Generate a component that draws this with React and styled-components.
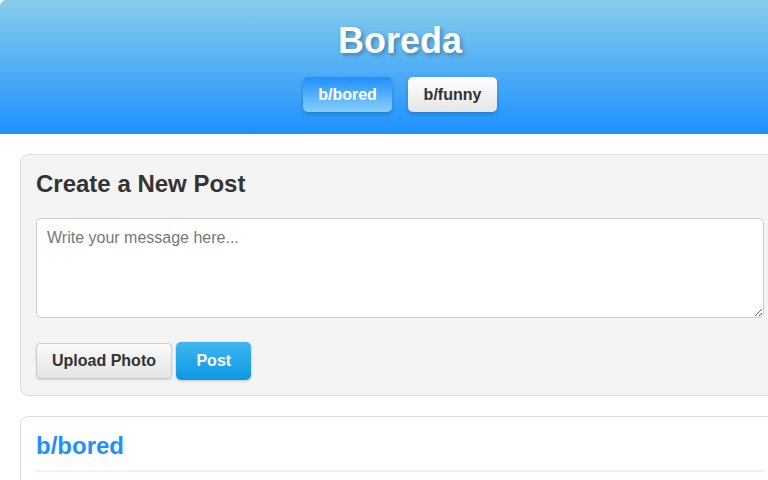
import styled, { createGlobalStyle, css } from "styled-components";

const GlobalStyle = createGlobalStyle`
  body {
    margin: 0;
    background: #fff;
    font-family: "Liberation Sans", Arial, sans-serif;
    color: #333;
  }
`;

const Page = styled.div`
  width: 800px;
`;

const Header = styled.header`
  background: linear-gradient(#87ceeb, #1e90ff);
  border-radius: 6px 6px 0 0;
  padding: 20px 20px 22px;
  text-align: center;
`;

const Title = styled.h1`
  margin: 0 0 15px;
  font-size: 36px;
  font-weight: bold;
  color: #fff;
  text-shadow: 2px 2px 4px rgba(0, 0, 0, 0.3);
`;

const Nav = styled.nav`
  display: flex;
  justify-content: center;
  gap: 16px;
`;

const NavButton = styled.button`
  font-family: inherit;
  font-size: 16px;
  font-weight: bold;
  padding: 8px 15px;
  line-height: 19px;
  width: 89px;
  border: none;
  border-radius: 5px;
  cursor: pointer;
  box-shadow: 0 2px 4px rgba(0, 0, 0, 0.2);
  ${(p) =>
    p.$active
      ? css`
          background: linear-gradient(#1e90ff, #87cefa);
          color: #fff;
        `
      : css`
          background: linear-gradient(#ffffff, #e6e6e6);
          color: #333;
        `}
`;

const Main = styled.main`
  padding: 20px;
`;

const Card = styled.section`
  box-sizing: border-box;
  width: 100%;
  background: ${(p) => (p.$muted ? "#f4f4f4" : "#fff")};
  border: 1px solid #ddd;
  border-radius: 8px;
  padding: 15px;
  margin-bottom: 20px;
`;

const CardTitle = styled.h2`
  margin: 0 0 20px;
  font-size: 24px;
  font-weight: bold;
  color: #333;
`;

const BoardTitle = styled.h2`
  margin: 0;
  padding-bottom: 10px;
  font-size: 24px;
  font-weight: bold;
  color: #1e90ff;
  border-bottom: 2px solid #e8f3fe;
`;

const TextArea = styled.textarea`
  display: block;
  box-sizing: border-box;
  width: 100%;
  height: 100px;
  padding: 10px;
  border: 1px solid #ccc;
  border-radius: 5px;
  font-family: inherit;
  font-size: 16px;
  color: #333;
  margin-bottom: 24px;
  &::placeholder {
    color: #777;
  }
`;

const Actions = styled.div``;

const UploadButton = styled.button`
  font-family: inherit;
  font-size: 16px;
  font-weight: bold;
  padding: 8px 15px;
  border: 1px solid #ccc;
  border-radius: 4px;
  background: linear-gradient(#fafafa, #e4e4e4);
  color: #333;
  box-shadow: 0 1px 2px rgba(0, 0, 0, 0.15);
  cursor: pointer;
`;

const PostButton = styled.button`
  font-family: inherit;
  font-size: 16px;
  font-weight: bold;
  padding: 10px 20px;
  border: none;
  border-radius: 5px;
  background: linear-gradient(#42b5f1, #0a98e2);
  color: #fff;
  box-shadow: 0 1px 3px rgba(0, 0, 0, 0.2);
  cursor: pointer;
`;

const App = () => {
  return (
    <Page>
      <GlobalStyle />
      <Header>
        <Title>Boreda</Title>
        <Nav>
          <NavButton $active>b/bored</NavButton>
          <NavButton>b/funny</NavButton>
        </Nav>
      </Header>
      <Main>
        <Card $muted>
          <CardTitle>Create a New Post</CardTitle>
          <TextArea placeholder="Write your message here..." />
          <Actions>
            <UploadButton>Upload Photo</UploadButton>{" "}
            <PostButton>Post</PostButton>
          </Actions>
        </Card>
        <Card>
          <BoardTitle>b/bored</BoardTitle>
        </Card>
      </Main>
    </Page>
  );
};

export default App;
